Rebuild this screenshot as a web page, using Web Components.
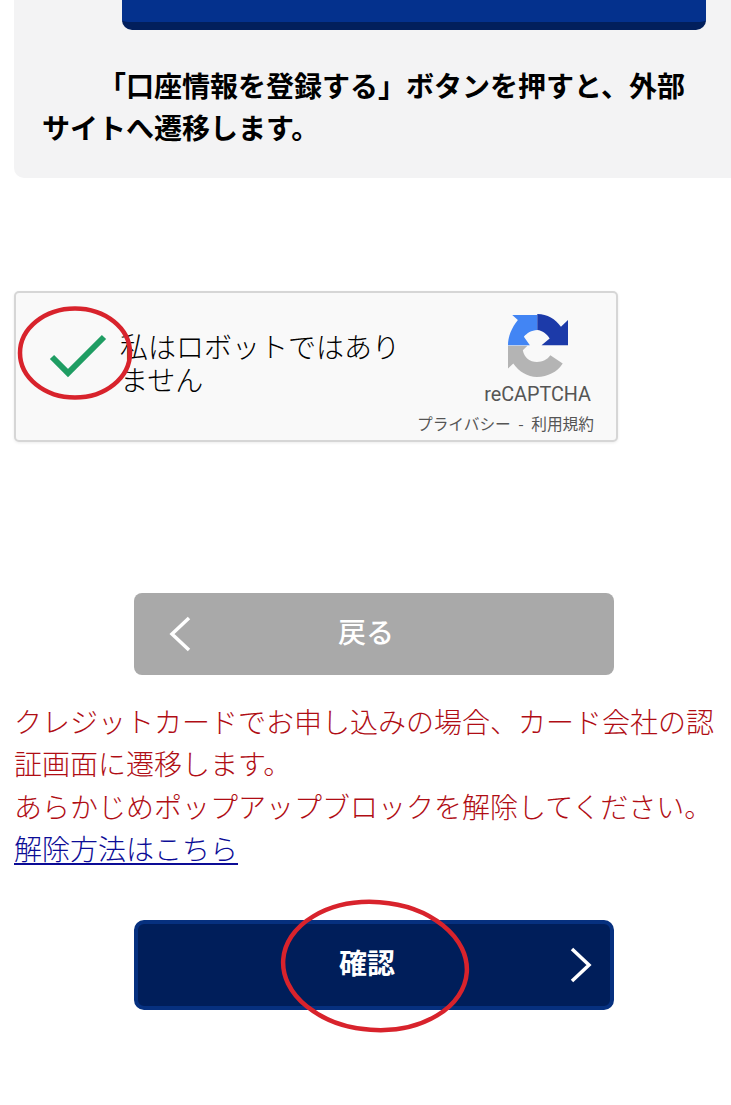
<!DOCTYPE html>
<html lang="ja">
<head>
<meta charset="utf-8">
<title>確認</title>
<style>
html,body{margin:0;padding:0;background:#fff;}
body{font-family:"Liberation Sans","Noto Sans CJK JP",sans-serif;width:731px;height:1105px;overflow:hidden;}
</style>
</head>
<body>
<app-page>
  <info-panel>「口座情報を登録する」ボタンを押すと、外部サイトへ遷移します。</info-panel>
  <captcha-box></captcha-box>
  <nav-button kind="back">戻る</nav-button>
  <notice-text>クレジットカードでお申し込みの場合、カード会社の認証画面に遷移します。<br>あらかじめポップアップブロックを解除してください。<br><a href="#" style="color:#0c0c96;text-decoration:underline;text-underline-offset:3px;text-decoration-thickness:2px">解除方法はこちら</a></notice-text>
  <nav-button kind="next">確認</nav-button>
</app-page>
<script>
function def(name, html){
  customElements.define(name, class extends HTMLElement{
    constructor(){super();this.attachShadow({mode:'open'}).innerHTML=typeof html==='function'?html(this):html;}
  });
}
const JP='"Noto Sans CJK JP","Liberation Sans",sans-serif';
def('app-page',`<style>
:host{display:flex;flex-direction:column;position:relative;width:731px;height:1105px;overflow:hidden;}
</style><slot></slot>`);
def('info-panel',`<style>
:host{display:block;box-sizing:border-box;margin-left:14px;width:730px;height:178px;background:#f3f3f4;border-radius:0 0 0 10px;font:700 28px/42px ${JP};color:#000;}
.top{box-sizing:border-box;margin-left:108px;width:584px;height:30px;background:#04318d;border-bottom:8px solid #021f5c;border-radius:0 0 10px 10px;}
p{margin:34px 0 0;padding-left:28px;width:644px;text-indent:56px;}
</style><div class="top"></div><p><slot></slot></p>`);
def('captcha-box',`<style>
:host{display:block;box-sizing:border-box;margin:113px 0 0 14px;width:604px;height:151px;border:2px solid #d6d6d6;border-radius:5px;background:#f9f9f9;box-shadow:0 1px 3px rgba(0,0,0,.08);position:relative;font-family:${JP};}
.row{display:flex;height:100%;box-sizing:border-box;}
.check{width:104px;flex:none;padding:42px 0 0 31px;box-sizing:border-box;}
.check svg{display:block;overflow:visible;}
.label{width:290px;flex:none;font-size:28px;font-weight:300;line-height:33px;color:#000;padding-top:37px;}
.brand{flex:1;min-width:0;display:flex;flex-direction:column;align-items:flex-end;padding:21px 22px 0 0;color:#555;}
.logo{align-self:flex-end;margin-right:26px;display:block;flex:none;}
.name{font:19.8px/22px Roboto,"Liberation Sans",sans-serif;margin-top:7px;margin-right:3px;}
.links{font-size:15.7px;line-height:20px;margin-top:8px;white-space:nowrap;word-spacing:4px;}
svg.ring{position:absolute;left:-16px;top:-16px;pointer-events:none;overflow:visible;}
</style>
<div class="row">
<div class="check"><svg width="60" height="44" viewBox="0 0 60 44"><polyline points="5,22 21,38 57,2" fill="none" stroke="#1f9d63" stroke-width="6"/></svg></div>
<div class="label">私はロボットではありません</div>
<div class="brand">
<svg class="logo" width="60" height="63" viewBox="30 27 170 188" preserveAspectRatio="none">
<path fill="#b4b4b4" d="M30 122H85L72 135C76 158 92 170 112 170 128 170 141 163 150 150L185 175C170 200 143 215 112 215 85 215 62 200 45 175L30 190Z"/>
<path fill="#4285f4" d="M30 120C30 95 40 68 58 45L42 30H113V75C96 76 84 84 75 95L92 120Z"/>
<path fill="#1c3aa9" d="M113 27C142 27 164 42 180 65L200 45V120H125L148 100C140 87 128 77 113 75Z"/>
</svg>
<div class="name">reCAPTCHA</div>
<div class="links">プライバシー - 利用規約</div>
</div>
</div>
<svg class="ring" width="130" height="130" viewBox="0 0 130 130"><ellipse cx="75" cy="76" rx="55" ry="44.5" fill="none" stroke="#d8232c" stroke-width="4.5"/></svg>`);
def('nav-button',el=>{
  const back=el.getAttribute('kind')==='back';
  return `<style>
:host{display:flex;align-items:center;justify-content:center;box-sizing:border-box;position:relative;margin-left:134px;width:480px;color:#fff;font:${back?500:700} 28px/1 ${JP};
${back?'height:82px;margin-top:151px;background:#a9a9a9;border-radius:8px;padding:0 16px 6px 0;':'height:90px;margin-top:51px;background:#001e5a;border:4px solid #06307f;border-radius:10px;padding:0 14px 6px 0;'}}
svg{position:absolute;top:50%;margin-top:-18px;${back?'left:33px':'right:16px'};}
.oval{position:absolute;left:138px;top:-23px;margin:0;right:auto;pointer-events:none;overflow:visible;}
</style><slot></slot>
<svg width="26" height="36" viewBox="0 0 26 36"><polyline points="${back?'22,2 5,18 22,34':'4,2 21,18 4,34'}" fill="none" stroke="#fff" stroke-width="3.5"/></svg>
${back?'':'<svg class="oval" width="198" height="130" viewBox="0 0 198 130"><ellipse cx="99" cy="65" rx="92" ry="64" transform="rotate(4 99 65)" fill="none" stroke="#d8232c" stroke-width="4.5"/></svg>'}`;
});
def('notice-text',`<style>
:host{display:block;margin:25px 0 0 14px;width:704px;font:300 28px/42.3px ${JP};color:#b00d14;}
</style><slot></slot>`);
</script>
</body>
</html>
